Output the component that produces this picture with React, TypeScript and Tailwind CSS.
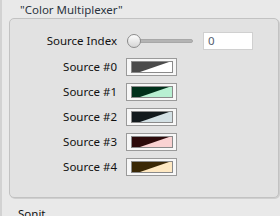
import React from "react";

const sources = [
	{ label: "Source #0", dark: "#4a4a4a", light: "#ffffff" },
	{ label: "Source #1", dark: "#00301a", light: "#b8f0d2" },
	{ label: "Source #2", dark: "#131a1d", light: "#d3e0e4" },
	{ label: "Source #3", dark: "#2c0a0a", light: "#f9d2d2" },
	{ label: "Source #4", dark: "#3a2806", light: "#fee8c2" },
];

const ColorWell = ({ dark, light }: { dark: string; light: string }) => (
	<div className="w-[51px] h-[18px] bg-[#f7f7f7] border border-[#9a9a9a] flex items-center justify-center">
		<svg width="40" height="10" viewBox="0 0 40 10" className="border border-[#8a8a8a] box-content">
			<rect width="40" height="10" fill={light} />
			<polygon points="0,0 37,0 8,10 0,10" fill={dark} />
		</svg>
	</div>
);

export default function App() {
	return (
		<div
			className="w-[280px] h-[216px] bg-[#e9e9e9] overflow-hidden border-l-2 border-[#d2d2d2] text-[11.5px] text-[#111]"
			style={{ fontFamily: '"Noto Sans", "Liberation Sans", sans-serif' }}
		>
			<div className="pl-[18px] pt-[3px] h-[18px] leading-[14px] text-[#2b3440]">"Color Multiplexer"</div>
			<div className="ml-[7px] w-[270px] h-[180px] bg-[#e2e2e2] border border-[#c2c2c2] rounded-[5px] shadow-[1px_1px_0_#cfcfcf] pt-[13px]">
				<div className="flex items-center h-[18px]">
					<div className="w-[107px] text-right">Source Index</div>
					<div className="ml-[10px] relative w-[66px] h-[14px] flex items-center">
						<div className="w-full h-[4px] rounded-full bg-[#b4b4b4] border border-[#a8a8a8]" />
						<div className="absolute left-0 top-0 w-[14px] h-[14px] rounded-full bg-gradient-to-b from-[#fdfdfd] to-[#d6d6d6] border border-[#8c8c8c]" />
					</div>
					<div className="ml-[10px] w-[50px] h-[18px] bg-white border border-[#d0d0d0] pl-[4px] leading-[16px] text-[#556070]">0</div>
				</div>
				<div className="flex flex-col gap-[7px] mt-[8px]">
					{sources.map((s) => (
						<div key={s.label} className="flex items-center h-[18px]">
							<div className="w-[107px] text-right">{s.label}</div>
							<div className="ml-[9px]">
								<ColorWell dark={s.dark} light={s.light} />
							</div>
						</div>
					))}
				</div>
			</div>
			<div className="pl-[16px] pt-[9px] leading-[14px]">Sonit</div>
		</div>
	);
}
